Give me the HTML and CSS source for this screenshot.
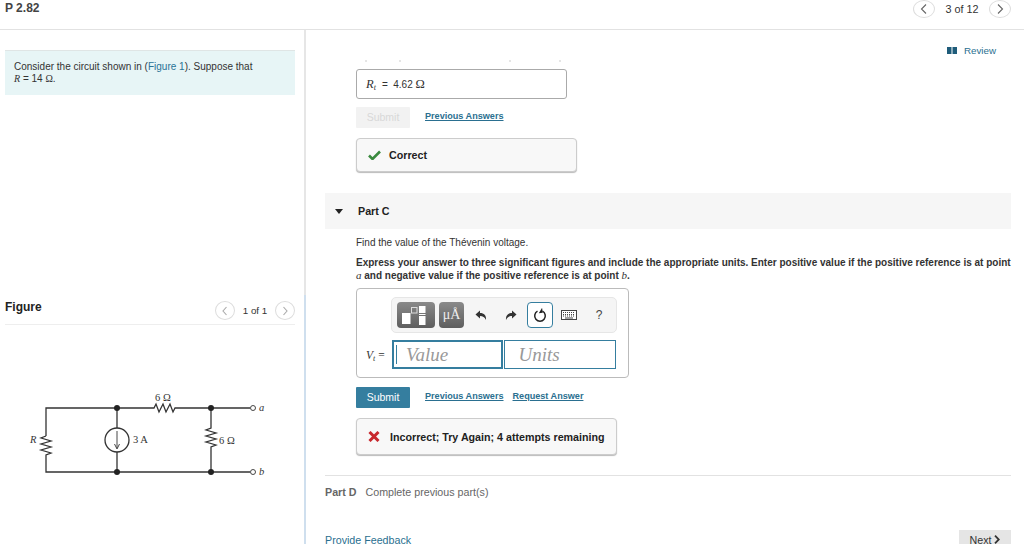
FILE: index.html
```html
<!DOCTYPE html>
<html lang="en">
<head>
<meta charset="utf-8">
<title>P 2.82</title>
<link rel="stylesheet" href="styles.css">
</head>
<body>
<header class="top">
  <h1 class="title">P 2.82</h1>
  <nav class="pager">
    <span class="circle"><svg width="8" height="12" viewBox="0 0 8 12"><path d="M6 1.500 1.500 6 6 10.500" class="chev"/></svg></span>
    <span class="pager-text">3 of 12</span>
    <span class="circle"><svg width="8" height="12" viewBox="0 0 8 12"><path d="M2 1.500 6.500 6 2 10.500" class="chev"/></svg></span>
  </nav>
</header>
<div class="columns">
  <aside class="left">
    <div class="intro">Consider the circuit shown in (<a class="link">Figure 1</a>). Suppose that<br><i class="math">R</i> = 14 <span class="math">Ω</span>.</div>
    <div class="fig-head">
      <h2 class="fig-title">Figure</h2>
      <div class="fig-pager">
        <span class="circle small"><svg width="8" height="10" viewBox="0 0 8 10"><path d="M5.500 1 2 5 5.500 9" class="chev light"/></svg></span>
        <span class="fig-text">1 of 1</span>
        <span class="circle small"><svg width="8" height="10" viewBox="0 0 8 10"><path d="M2.500 1 6 5 2.500 9" class="chev light"/></svg></span>
      </div>
    </div>
    <svg class="circuit" width="300" height="115" viewBox="0 -15 300 115">
      <g class="wire">
        <path d="M46 41V13H154l2-4 3 8 4-8 3 8 4-8 3 8 2-4H250"/>
        <path d="M46 41l-5 2 10 3-10 3 10 3-10 3 10 3-5 2V77H250"/>
        <path d="M117 13V33M117 57V77"/>
        <path d="M211 13V33l-5 2 10 3-10 3 10 3-10 3 10 3-5 2V77"/>
        <circle cx="117" cy="45" r="12"/>
        <path class="thin" d="M117 36V53M114.500 49 117 54 119.500 49"/>
        <circle class="thin" cx="253" cy="13" r="2.500"/>
        <circle class="thin" cx="253" cy="77" r="2.500"/>
      </g>
      <g class="dots">
        <circle cx="117" cy="13" r="3"/><circle cx="211" cy="13" r="3"/>
        <circle cx="117" cy="77" r="3"/><circle cx="211" cy="77" r="3"/>
      </g>
      <g class="ctext">
        <text x="155" y="6">6 Ω</text>
        <text x="133" y="48">3 A</text>
        <text x="219" y="49">6 Ω</text>
        <text x="30" y="48" class="it">R</text>
        <text x="259" y="16" class="it">a</text>
        <text x="259" y="80" class="it">b</text>
      </g>
    </svg>
  </aside>
  <main class="right">
    <div class="review-row"><a class="review"><svg width="10" height="7" viewBox="0 0 10 7"><path d="M0 0H4.500V7H0ZM5.500 0H10V7H5.500Z" fill="#1f5c7a"/></svg>Review</a></div>
    <svg class="ticks" width="340" height="2" viewBox="0 0 340 2"><path d="M41 0V2M75 0V2M185 0V2M235 0V2M344 0V2" stroke="#ccc"/></svg>
    <div class="part">
      <div class="answer"><span class="math big rt"><i>R</i><sub><i>t</i></sub></span>= &nbsp;4.62 <span class="math big">Ω</span></div>
      <div class="actions first">
        <span class="btn disabled">Submit</span>
        <a class="act-link">Previous Answers</a>
      </div>
      <div class="feedback correct">
        <svg width="13" height="10" viewBox="0 0 13 10"><path d="M1 5.500 4.500 9 12 1.500" fill="none" stroke="#3a8a3f" stroke-width="2.600"/></svg>
        <span>Correct</span>
      </div>
    </div>
    <div class="part-band">
      <span class="tri"></span><span class="part-name">Part C</span>
    </div>
    <div class="part">
      <p class="q">Find the value of the Thévenin voltage.</p>
      <p class="q strong">Express your answer to three significant figures and include the appropriate units. Enter positive value if the positive reference is at point <i class="math n">a</i> and negative value if the positive reference is at point <i class="math n">b</i>.</p>
      <div class="entry">
        <div class="toolbar">
          <span class="tool dark">
            <svg width="36" height="25" viewBox="0 0 36 25">
              <rect x="4" y="10" width="8.500" height="11" fill="#fff"/>
              <rect x="13.500" y="4.500" width="5.500" height="5.500" fill="none" stroke="#ddd"/>
              <rect x="21" y="3" width="6.500" height="7" fill="#fff"/>
              <rect x="21" y="11" width="6.500" height="1" fill="#fff"/>
              <rect x="21" y="13" width="6.500" height="9" fill="#fff"/>
            </svg>
          </span>
          <span class="tool dark mu">μÅ</span>
          <span class="tool plain"><svg width="12" height="11" viewBox="0 0 12 11"><path d="M0.500 4.500 5 0.500V3C9 3 11.500 5.500 11 10 9.500 7 8 6 5 6V8.500Z" fill="#333"/></svg></span>
          <span class="tool plain"><svg width="12" height="11" viewBox="0 0 12 11"><path d="M11.500 4.500 7 0.500V3C3 3 0.500 5.500 1 10 2.500 7 4 6 7 6V8.500Z" fill="#333"/></svg></span>
          <span class="tool plain reset"><svg width="14" height="14" viewBox="0 0 14 14"><path d="M4.500 3.200A5.300 5.300 0 1 0 9.500 3.200" fill="none" stroke="#222" stroke-width="1.500"/><path d="M9.500 0V5H5.500Z" fill="#222" transform="rotate(-8 8 3)"/></svg></span>
          <span class="tool plain"><svg width="16" height="10" viewBox="0 0 16 10"><rect x="0.500" y="0.500" width="15" height="9" fill="#fff" stroke="#444"/><path d="M2 2.500H14M2 4.500H14M2 6H14" stroke="#444" stroke-dasharray="1 1"/><path d="M4 8H12" stroke="#444"/></svg></span>
          <span class="tool plain help">?</span>
        </div>
        <div class="inputs">
          <span class="var"><i>V</i><sub><i>t</i></sub> =</span>
          <span class="field active"><span class="caret"></span><span class="ph">Value</span></span>
          <span class="field"><span class="ph">Units</span></span>
        </div>
      </div>
      <div class="actions second">
        <span class="btn primary">Submit</span>
        <a class="act-link">Previous Answers</a>
        <a class="act-link">Request Answer</a>
      </div>
      <div class="feedback incorrect">
        <svg width="12" height="11" viewBox="0 0 12 11"><path d="M1.500 1 10.500 10M10.500 1 1.500 10" fill="none" stroke="#c8282d" stroke-width="3"/></svg>
        <span>Incorrect; Try Again; 4 attempts remaining</span>
      </div>
    </div>
    <div class="part-d"><b>Part D</b><span>Complete previous part(s)</span></div>
    <div class="bottom">
      <a class="provide">Provide Feedback</a>
      <span class="next">Next <svg width="6" height="9" viewBox="0 0 6 9"><path d="M1 .7 4.800 4.500 1 8.300" fill="none" stroke="#333" stroke-width="1.800"/></svg></span>
    </div>
  </main>
</div>
</body>
</html>
```
FILE: styles.css
```css
* { box-sizing: border-box; }
html, body { margin: 0; height: 544px; overflow: hidden; }
body { font-family: "Liberation Sans", Arial, sans-serif; font-size: 10px; color: #333; background: #fff; }
p, h1, h2 { margin: 0; }
.top { height: 30px; border-bottom: 1px solid #e2e2e2; display: flex; justify-content: space-between; padding: 0 13px 0 5px; flex: none; }
.title { font-size: 12px; font-weight: bold; color: #444; line-height: 15px; padding-top: 1px; }
.pager { display: flex; align-items: center; height: 18px; }
.pager-text { width: 54px; text-align: center; font-size: 10.800px; color: #333; }
.circle { width: 22px; height: 18px; border: 1px solid #ddd; border-radius: 50%; display: flex; align-items: center; justify-content: center; }
.circle.small { width: 20px; height: 19px; }
.chev { fill: none; stroke: #666; stroke-width: 1.100; }
.chev.light { stroke: #aaa; }
.columns { display: flex; height: 514px; }
.left { width: 306px; border-right: 2px solid; border-image: linear-gradient(to bottom, #e6e6e6 265px, #cfdfee 265px) 1; padding: 20px 0 0 5px; flex: none; }
.intro { width: 290px; height: 45px; background: #e7f5f6; border-top: 1px solid #dfe5e5; padding: 10px 9px; font-size: 10px; line-height: 12px; color: #333; }
.link { color: #2a7396; }
.math { font-family: "Liberation Serif", serif; }
.math.n { font-weight: normal; font-size: 11px; }
.fig-head { margin-top: 196px; width: 290px; height: 34px; border-bottom: 1px solid #eee; display: flex; justify-content: space-between; align-items: flex-start; padding-top: 9px; }
.fig-title { font-size: 12px; font-weight: bold; color: #222; line-height: 15px; }
.fig-pager { display: flex; align-items: center; margin-top: 1px; }
.fig-text { width: 40px; text-align: center; font-size: 9.800px; color: #333; }
.circuit { display: block; margin: 55px 0 0 -5px; }
.wire { fill: none; stroke: #333; stroke-width: 1.300; }
.wire .thin { stroke-width: .9; }
.dots { fill: #222; }
.ctext { font-family: "Liberation Serif", serif; font-size: 10.500px; fill: #333; }
.ctext .it { font-style: italic; }
.right { flex: 1; min-width: 0; padding: 15px 13px 0 19px; display: flex; flex-direction: column; }
.right > * { flex: none; }
.review-row { display: flex; justify-content: flex-end; padding-right: 15px; height: 15px; }
.review { display: flex; align-items: center; gap: 7px; height: 10px; font-size: 9.800px; color: #2a6f90; }
.ticks { display: block; margin-bottom: 7px; }
.part { padding-left: 31px; }
.answer { width: 211px; height: 30px; border: 1px solid #aaa; border-radius: 3px; padding-left: 9px; font-size: 10px; line-height: 28px; white-space: nowrap; }
.answer .big { font-size: 12.500px; }
.answer .rt { margin-right: 6px; }
sub { font-size: 8px; line-height: 0; vertical-align: -2px; }
.actions { display: flex; align-items: center; }
.actions.first { margin-top: 8px; }
.actions.second { margin-top: 9px; }
.btn { width: 54px; height: 21px; display: flex; align-items: center; justify-content: center; font-size: 10.500px; border-radius: 1px; margin-right: 15px; padding-bottom: 1px; }
.btn.disabled { background: #f2f2f2; color: #d8d8d8; }
.btn.primary { background: #357e9f; color: #fff; }
.act-link { color: #2a6f90; font-size: 9.100px; font-weight: bold; text-decoration: underline; margin: 0 9px 3px 0; }
.feedback { display: flex; align-items: center; background: #f8f8f8; border: 1px solid #ccc; border-radius: 4px; box-shadow: 0 1px 1px #bbb; font-weight: bold; color: #222; font-size: 10.700px; }
.feedback.correct { width: 221px; height: 34px; margin-top: 10px; padding-left: 11px; gap: 8px; }
.feedback.incorrect { width: 261px; height: 37px; margin-top: 10px; padding-left: 11px; gap: 10px; }
.part-band { height: 36px; margin-top: 21px; background: #f6f6f6; display: flex; align-items: center; padding-left: 10px; }
.tri { width: 0; height: 0; border-left: 4.500px solid transparent; border-right: 4.500px solid transparent; border-top: 5px solid #222; margin-right: 15px; }
.part-name { font-size: 10.700px; font-weight: bold; color: #222; }
.q { font-size: 10px; line-height: 12px; color: #333; }
.part-band + .part .q:first-child { margin-top: 8px; }
.q.strong { font-weight: bold; margin-top: 8px; }
.entry { width: 273px; height: 90px; margin-top: 6px; border: 1px solid #bbb; border-radius: 4px; padding: 8px 11px 0 34px; }
.toolbar { width: 226px; height: 36px; background: #f5f5f5; border: 1px solid #e6e6e6; border-radius: 5px; display: flex; align-items: center; padding-left: 5px; gap: 4px; }
.tool { height: 26px; display: flex; align-items: center; justify-content: center; border-radius: 4px; flex: none; }
.tool.dark { background: linear-gradient(#8a8a8a, #5e5e5e); width: 38px; }
.tool.mu { width: 25px; color: #eee; font-family: "Liberation Serif", serif; font-size: 14px; }
.tool.plain { width: 26px; }
.tool.reset { border: 1px solid #357e9f; background: #fff; margin: 0 -1px; }
.help { font-size: 12px; color: #444; }
.inputs { display: flex; align-items: center; margin-top: 7px; margin-left: -25px; }
.var { width: 26px; font-family: "Liberation Serif", serif; font-size: 11.500px; color: #333; white-space: nowrap; }
.field { width: 112px; height: 29px; border: 1px solid #357e9f; display: flex; align-items: center; padding-left: 13px; position: relative; margin-right: 1px; }
.field.active { box-shadow: 0 0 0 1px #357e9f inset; }
.caret { position: absolute; left: 3px; top: 4px; bottom: 4px; width: 1px; background: #357e9f; }
.ph { font-family: "Liberation Serif", serif; font-style: italic; font-size: 19px; color: #999; }
.part-d { margin-top: 20px; border-top: 1px solid #e2e2e2; padding-top: 10px; display: flex; gap: 9px; font-size: 10.700px; line-height: 13px; color: #666; }
.part-d b { color: #666; }
.bottom { margin-top: 31px; display: flex; justify-content: space-between; align-items: flex-start; }
.provide { font-size: 10.700px; color: #2a6f90; margin-top: 4px; }
.next { width: 52px; height: 24px; background: #e5e5e5; color: #333; font-size: 10.700px; display: flex; gap: 3px; align-items: center; justify-content: center; padding-bottom: 5px; }
```
